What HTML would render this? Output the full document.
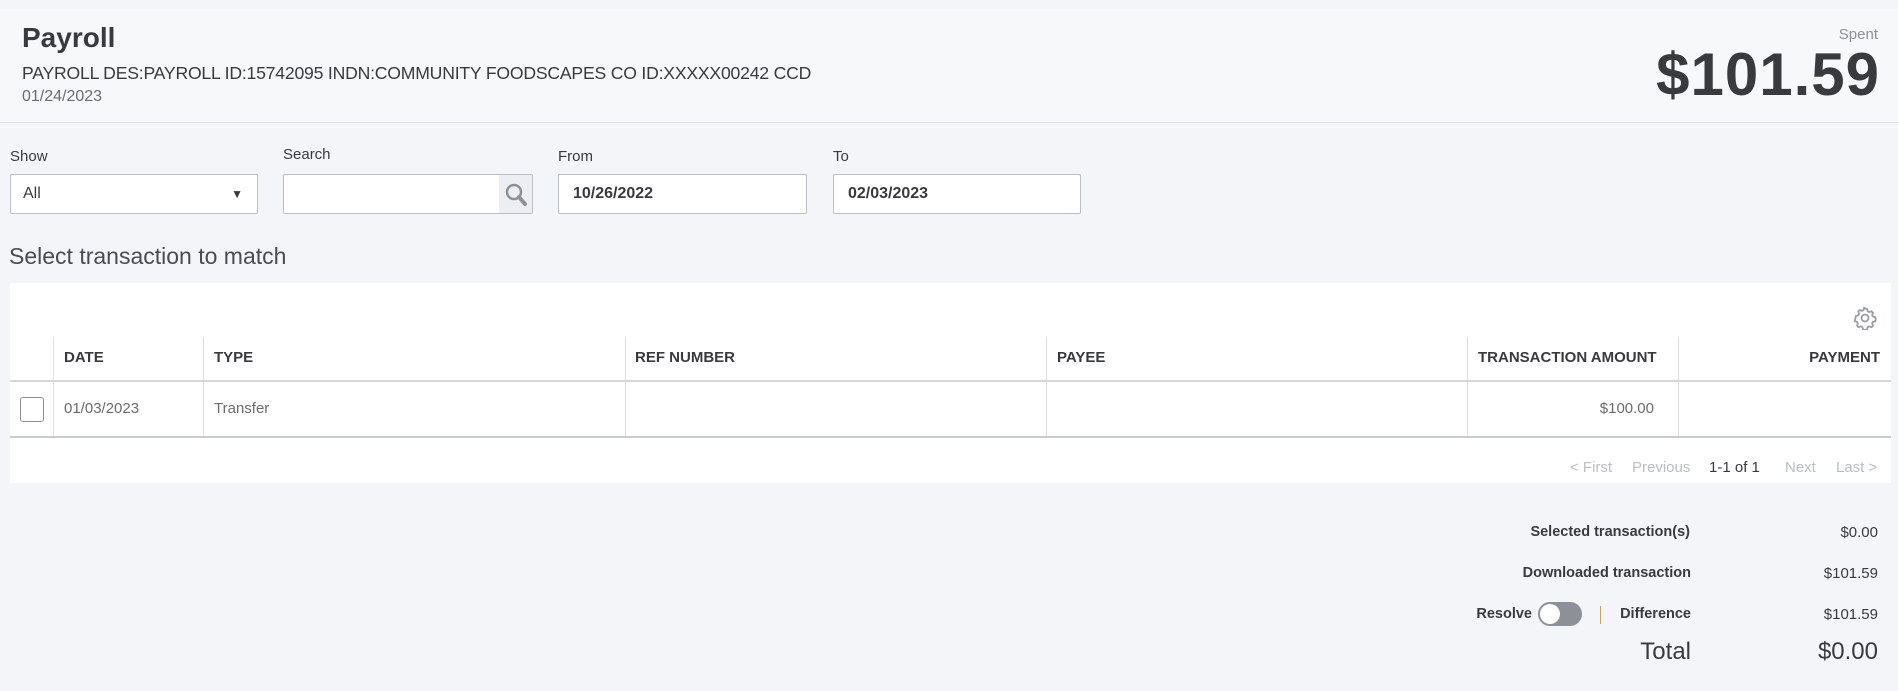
<!DOCTYPE html>
<html><head><style>
*{margin:0;padding:0;box-sizing:border-box}
body{width:1898px;height:691px;background:#f4f5f8;font-family:"Liberation Sans",sans-serif;color:#393a3d;position:relative;overflow:hidden}
.a{position:absolute;white-space:nowrap}
.hdr{position:absolute;left:0;top:9px;width:1898px;height:114px;background:#f7f8fa;border-bottom:1px solid #e3e5ea}
.lbl{font-size:15px;color:#393a3d;top:148px}
.box{position:absolute;top:174px;height:40px;background:#fff;border:1px solid #babec5;border-radius:2px;font-size:16px;line-height:38px;padding-left:12px}
.th{font-size:15px;font-weight:bold;color:#393a3d;top:349px}
.vl{position:absolute;width:1px;background:#dcdee2}
.pg{font-size:15px;color:#babec5;top:459px}
.sm{font-size:15px;color:#393a3d}
</style></head><body>
<div class="hdr"></div>
<div class="a" style="left:22px;top:22px;font-size:28px;font-weight:bold;color:#393a3d">Payroll</div>
<div class="a" style="left:22px;top:63px;font-size:17.6px;letter-spacing:-0.2px">PAYROLL DES:PAYROLL ID:15742095 INDN:COMMUNITY FOODSCAPES CO ID:XXXXX00242 CCD</div>
<div class="a" style="left:22px;top:88px;font-size:16px;color:#6b6c72">01/24/2023</div>
<div class="a" style="right:20px;top:26px;font-size:15px;color:#8d9096">Spent</div>
<div class="a" style="right:18px;top:40px;font-size:60px;font-weight:bold;color:#393a3d;letter-spacing:1px">$101.59</div>

<div class="a lbl" style="left:10px">Show</div>
<div class="a lbl" style="left:283px;top:146px">Search</div>
<div class="a lbl" style="left:558px">From</div>
<div class="a lbl" style="left:833px">To</div>
<div class="box" style="left:10px;width:248px">All<span class="a" style="right:14px;top:0;font-size:12px">&#9660;</span></div>
<div class="box" style="left:283px;width:250px;padding:0"><div class="a" style="right:0;top:0;width:33px;height:38px;background:#eceef1"><svg width="33" height="38" viewBox="0 0 33 38"><circle cx="15" cy="17" r="7" fill="none" stroke="#8d9096" stroke-width="2.5"/><path d="M20 22 L26 29" stroke="#8d9096" stroke-width="4" stroke-linecap="round"/></svg></div></div>
<div class="box" style="left:558px;width:249px;font-weight:bold;font-size:16px;padding-left:14px">10/26/2022</div>
<div class="box" style="left:833px;width:248px;font-weight:bold;font-size:16px;padding-left:14px">02/03/2023</div>

<div class="a" style="left:9px;top:243px;font-size:23px;color:#4a4b50">Select transaction to match</div>

<div class="a" style="left:10px;top:283px;width:1881px;height:200px;background:#fff"></div>
<svg class="a" style="left:1853px;top:306px" width="24" height="24" viewBox="0 0 24 24"><path d="M12 2.5l2 .3.6 2.4 1.6.9 2.3-.9 1.5 1.5-.9 2.3.9 1.6 2.4.6.3 2-.3 2-2.4.6-.9 1.6.9 2.3-1.5 1.5-2.3-.9-1.6.9-.6 2.4-2 .3-2-.3-.6-2.4-1.6-.9-2.3.9-1.5-1.5.9-2.3-.9-1.6-2.4-.6L2.5 12l.3-2 2.4-.6.9-1.6-.9-2.3 1.5-1.5 2.3.9 1.6-.9.6-2.4z" fill="none" stroke="#9a9da3" stroke-width="1.8" stroke-linejoin="round"/><circle cx="12" cy="12" r="3.5" fill="none" stroke="#9a9da3" stroke-width="1.8"/></svg>
<div class="vl" style="left:53px;top:337px;height:100px"></div>
<div class="vl" style="left:203px;top:337px;height:100px"></div>
<div class="vl" style="left:625px;top:337px;height:100px"></div>
<div class="vl" style="left:1046px;top:337px;height:100px"></div>
<div class="vl" style="left:1467px;top:337px;height:100px"></div>
<div class="vl" style="left:1678px;top:337px;height:100px"></div>
<div class="a" style="left:10px;top:380px;width:1881px;height:2px;background:#d4d7dc"></div>
<div class="a" style="left:10px;top:436px;width:1881px;height:2px;background:#c8cbd0"></div>
<div class="a th" style="left:64px">DATE</div>
<div class="a th" style="left:214px">TYPE</div>
<div class="a th" style="left:635px">REF NUMBER</div>
<div class="a th" style="left:1057px">PAYEE</div>
<div class="a th" style="left:1478px">TRANSACTION AMOUNT</div>
<div class="a th" style="right:18px">PAYMENT</div>
<div class="a" style="left:20px;top:397px;width:24px;height:25px;border:1px solid #8d9096;border-radius:3px;background:#fff"></div>
<div class="a" style="left:64px;top:400px;font-size:15px;color:#6b6c72">01/03/2023</div>
<div class="a" style="left:214px;top:400px;font-size:15px;color:#6b6c72">Transfer</div>
<div class="a" style="right:244px;top:400px;font-size:15px;color:#6b6c72">$100.00</div>
<div class="a pg" style="left:1570px">&lt; First</div>
<div class="a pg" style="left:1632px">Previous</div>
<div class="a pg" style="left:1709px;color:#393a3d">1-1 of 1</div>
<div class="a pg" style="left:1785px">Next</div>
<div class="a pg" style="left:1836px">Last &gt;</div>

<div class="a sm" style="right:208px;top:524px;font-weight:bold;font-size:14.5px">Selected transaction(s)</div>
<div class="a sm" style="right:20px;top:524px">$0.00</div>
<div class="a sm" style="right:207px;top:565px;font-weight:bold;font-size:14.5px">Downloaded transaction</div>
<div class="a sm" style="right:207px;top:606px;font-weight:bold;font-size:14.5px;right:366px">Resolve</div>
<div class="a sm" style="right:20px;top:565px">$101.59</div>
<div class="a" style="left:1538px;top:602px;width:44px;height:24px;border-radius:12px;background:#8d9096"><div class="a" style="left:2px;top:2px;width:20px;height:20px;border-radius:50%;background:#fff"></div></div>
<div class="a" style="left:1600px;top:606px;width:1px;height:18px;background:#c9a46a"></div>
<div class="a sm" style="right:207px;top:606px;font-weight:bold;font-size:14.5px">Difference</div>
<div class="a sm" style="right:20px;top:606px">$101.59</div>
<div class="a" style="right:207px;top:638px;font-size:24px;color:#393a3d">Total</div>
<div class="a" style="right:20px;top:638px;font-size:24px;color:#393a3d">$0.00</div>
</body></html>
